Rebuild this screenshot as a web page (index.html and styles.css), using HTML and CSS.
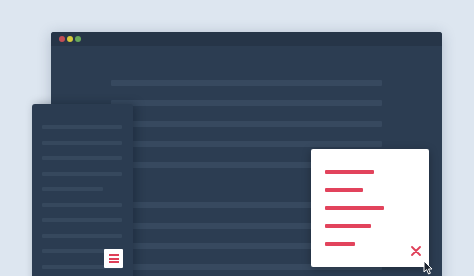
FILE: index.html
```html
<!DOCTYPE html>
<html>
<head>
<meta charset="utf-8">
<link rel="stylesheet" href="styles.css">
</head>
<body>
<div class="scene">
  <div class="window">
    <div class="titlebar">
      <span class="dot red"></span><span class="dot yellow"></span><span class="dot green"></span>
    </div>
    <div class="content">
      <div class="line"></div>
      <div class="line"></div>
      <div class="line"></div>
      <div class="line"></div>
      <div class="line"></div>
      <div class="line gap"></div>
      <div class="line"></div>
      <div class="line"></div>
      <div class="line"></div>
      <div class="line"></div>
    </div>
  </div>

  <div class="panel">
    <div class="pline"></div>
    <div class="pline"></div>
    <div class="pline"></div>
    <div class="pline"></div>
    <div class="pline short"></div>
    <div class="pline"></div>
    <div class="pline"></div>
    <div class="pline"></div>
    <div class="pline"></div>
    <div class="pline"></div>
  </div>

  <div class="burger">
    <span></span><span></span><span></span>
  </div>

  <div class="popup">
    <div class="rline" style="width:49px"></div>
    <div class="rline" style="width:38px"></div>
    <div class="rline" style="width:59px"></div>
    <div class="rline" style="width:46px"></div>
    <div class="rline" style="width:30px"></div>
    <svg class="close" width="10" height="10" viewBox="0 0 10 10">
      <path d="M1 1 L9 9 M9 1 L1 9" stroke="#df3f58" stroke-width="1.8" stroke-linecap="round"/>
    </svg>
  </div>

  <svg class="cursor" width="11" height="15" viewBox="0 0 11 15">
    <path d="M1 1 L1 12 L3.6 9.6 L5.6 14 L7.4 13.2 L5.5 9 L9 9 Z" fill="#1d2530" stroke="#ffffff" stroke-width="1" stroke-linejoin="round"/>
  </svg>
</div>
</body>
</html>
```

FILE: styles.css
```css
html, body {
  margin: 0;
  padding: 0;
}
body {
  background: #dde6f0;
  font-family: "Liberation Sans", Arial, sans-serif;
}
.scene {
  position: relative;
  width: 474px;
  height: 276px;
  overflow: hidden;
  background: #dde6f0;
}
.window {
  position: absolute;
  left: 51px;
  top: 32px;
  width: 391px;
  height: 260px;
  background: #2c3d52;
  border-radius: 3px 3px 0 0;
  box-shadow: 0 2px 14px rgba(40, 60, 90, 0.25);
  overflow: hidden;
}
.titlebar {
  height: 14px;
  background: #263548;
  display: flex;
  align-items: center;
  gap: 2px;
  padding-left: 8px;
}
.dot {
  width: 6px;
  height: 6px;
  border-radius: 50%;
}
.dot.red { background: #c24d55; }
.dot.yellow { background: #d6c93c; }
.dot.green { background: #68a85a; }
.content {
  display: flex;
  flex-direction: column;
  gap: 14.4px;
  padding-left: 60px;
  padding-top: 34px;
}
.line {
  width: 271px;
  height: 6px;
  background: #37495f;
  border-radius: 1px;
}
.line.gap {
  visibility: hidden;
}
.panel {
  position: absolute;
  left: 32px;
  top: 104px;
  width: 101px;
  height: 190px;
  background: #2b3c51;
  border-radius: 3px 3px 0 0;
  box-shadow: 3px 0 10px rgba(10, 20, 35, 0.35);
  display: flex;
  flex-direction: column;
  gap: 11.5px;
  padding: 21px 0 0 10px;
  box-sizing: border-box;
}
.pline {
  width: 80px;
  height: 4px;
  background: #36485d;
  border-radius: 1px;
}
.pline.short {
  width: 61px;
}
.burger {
  position: absolute;
  left: 104px;
  top: 249px;
  width: 19px;
  height: 19px;
  background: #ffffff;
  border-radius: 1px;
  display: flex;
  flex-direction: column;
  justify-content: center;
  align-items: center;
  gap: 1.6px;
}
.burger span {
  width: 10px;
  height: 2px;
  background: #df3f58;
}
.popup {
  position: absolute;
  left: 311px;
  top: 149px;
  width: 118px;
  height: 118px;
  background: #ffffff;
  border-radius: 2px;
  box-shadow: 0 2px 10px rgba(0, 0, 0, 0.3);
  display: flex;
  flex-direction: column;
  gap: 14px;
  padding: 21px 0 0 14px;
  box-sizing: border-box;
}
.rline {
  height: 4px;
  background: #e2435c;
  border-radius: 1px;
}
.close {
  position: absolute;
  left: 100px;
  top: 97px;
}
.cursor {
  position: absolute;
  left: 423px;
  top: 260px;
}
```
